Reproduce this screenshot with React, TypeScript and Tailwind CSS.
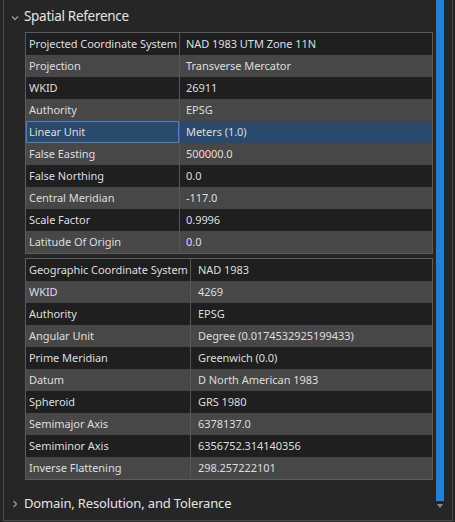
import React from "react";

const table1: [string, string][] = [
  ["Projected Coordinate System", "NAD 1983 UTM Zone 11N"],
  ["Projection", "Transverse Mercator"],
  ["WKID", "26911"],
  ["Authority", "EPSG"],
  ["Linear Unit", "Meters (1.0)"],
  ["False Easting", "500000.0"],
  ["False Northing", "0.0"],
  ["Central Meridian", "-117.0"],
  ["Scale Factor", "0.9996"],
  ["Latitude Of Origin", "0.0"],
];

const table2: [string, string][] = [
  ["Geographic Coordinate System", "NAD 1983"],
  ["WKID", "4269"],
  ["Authority", "EPSG"],
  ["Angular Unit", "Degree (0.0174532925199433)"],
  ["Prime Meridian", "Greenwich (0.0)"],
  ["Datum", "D North American 1983"],
  ["Spheroid", "GRS 1980"],
  ["Semimajor Axis", "6378137.0"],
  ["Semiminor Axis", "6356752.314140356"],
  ["Inverse Flattening", "298.257222101"],
];

function Table({
  rows,
  wide,
  selected,
}: {
  rows: [string, string][];
  wide: boolean;
  selected?: number;
}) {
  return (
    <div className="w-[408px] border border-[#5b5b5b] flex flex-col">
      {rows.map(([k, v], i) => {
        const sel = i === selected;
        const bg = sel ? "bg-[#2a4a6b]" : i % 2 === 0 ? "bg-[#1f1f1f]" : "bg-[#474747]";
        return (
          <div key={k} className={`flex h-[22px] ${bg}`}>
            <div
              className={`${wide ? "w-[164px]" : "w-[153px]"} shrink-0 flex items-center pl-[3px] whitespace-nowrap ${
                sel ? "shadow-[inset_0_0_0_1px_#4683c2]" : ""
              }`}
            >
              {k}
            </div>
            <div className="w-px shrink-0 bg-[#555555]" />
            <div
              className={`flex-1 flex items-center whitespace-nowrap ${wide ? "pl-[7px]" : "pl-[6px]"}`}
            >
              {v}
            </div>
          </div>
        );
      })}
    </div>
  );
}

export default function App() {
  return (
    <div
      className="w-[455px] h-[522px] bg-[#262626] pl-[3px] pr-[2px] pb-[1px] text-[#dedede] overflow-hidden"
      style={{ fontFamily: '"Noto Sans", "Open Sans", sans-serif' }}
    >
      <div className="h-full border-l border-r border-b border-[#4b4b4b] flex">
        <div className="w-[429px] shrink-0 flex flex-col">
          <div className="h-[32px] flex items-center pl-[7px] pt-[2px] gap-[5px]">
            <svg width="8" height="6" viewBox="0 0 8 6" className="mt-[1px]">
              <path d="M1 1.5 L4 4.5 L7 1.5" fill="none" stroke="#9a9a9a" strokeWidth="1.3" />
            </svg>
            <span className="text-[13.5px] text-[#e4e4e4] tracking-[-0.3px] leading-none">
              Spatial Reference
            </span>
          </div>
          <div className="pl-[21px] text-[11px] tracking-[-0.05px] leading-[14px]">
            <Table rows={table1} wide={false} selected={4} />
            <div className="h-[4px]" />
            <Table rows={table2} wide={true} />
          </div>
          <div className="flex-1 flex items-center pl-[8px] gap-[6px] pt-[7px]">
            <svg width="6" height="8" viewBox="0 0 6 8">
              <path d="M1.5 1 L4.5 4 L1.5 7" fill="none" stroke="#9a9a9a" strokeWidth="1.3" />
            </svg>
            <span className="text-[13px] text-[#e4e4e4] tracking-[-0.15px] leading-none">
              Domain, Resolution, and Tolerance
            </span>
          </div>
        </div>
        <div className="flex-1 flex flex-col pl-[3px]">
          <div className="w-[8px] h-[501px] bg-[#1f80d9]" />
          <div className="w-[8px] flex justify-center mt-[2px]">
            <svg width="8" height="6" viewBox="0 0 8 6">
              <path d="M1 1 L7 1 L4 5 Z" fill="#8c8c8c" />
            </svg>
          </div>
        </div>
      </div>
    </div>
  );
}
